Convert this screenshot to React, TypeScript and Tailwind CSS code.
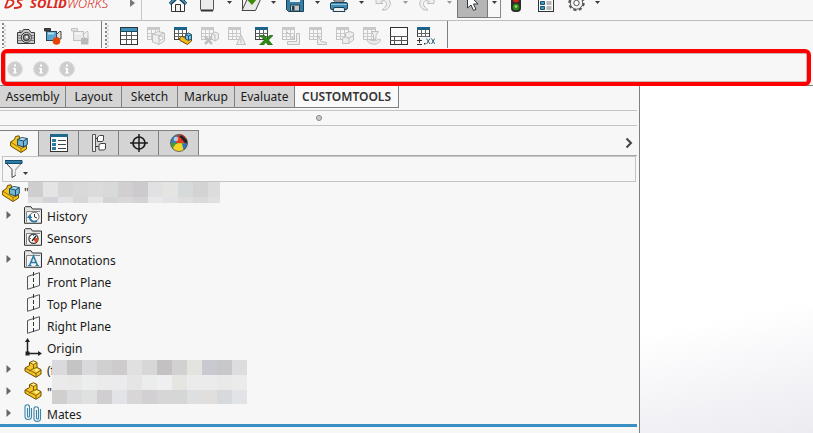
import React from 'react';
import clsx from 'clsx';

interface IconProps {
  children: React.ReactNode;
  width?: number;
  height?: number;
  className?: string;
}

function Icon({ children, width = 18, height = 18, className }: IconProps) {
  return (
    <svg
      width={width}
      height={height}
      viewBox={`0 0 ${width} ${height}`}
      fill="none"
      aria-hidden="true"
      className={clsx('block shrink-0', className)}
    >
      {children}
    </svg>
  );
}

/* ---------- quick access bar icons (20px tall, upper part runs off the window) ---------- */

const HomeIcon = () => (
  <Icon height={20}>
    <path d="M2.500 8V19.500H15.500V8" fill="#fff" stroke="#333" />
    <path d="M6.500 19V12.500H11.500V19" fill="#eee" stroke="#333" />
    <path d="M1 12L9 4.500L17 12" stroke="#173f56" strokeWidth="3.500" />
    <path d="M1 11.500L9 4L17 11.500" stroke="#4f9bc4" strokeWidth="1.500" />
  </Icon>
);

const NewIcon = () => (
  <Icon width={14} height={20}>
    <rect x="0.500" y="2.500" width="13" height="16" rx="1" fill="#ececec" stroke="#555" />
    <path d="M1 18.500H13" stroke="#333" strokeWidth="2" />
  </Icon>
);

const OpenIcon = () => (
  <Icon width={20} height={20}>
    <path d="M1.500 18V3.500H7" stroke="#444" />
    <path d="M1 18.500L6 7.500H19.500L14.500 18.500Z" fill="#e9e9e9" stroke="#444" />
    <path d="M5.500 7H16L11 13Z" fill="#3b8a06" />
  </Icon>
);

const SaveIcon = () => (
  <Icon height={20}>
    <path d="M0.500 3H17.500V19.500H2.500L0.500 17.500Z" fill="#347da3" stroke="#17405a" />
    <path d="M4 3H14V10H4Z" fill="#e4eef3" />
    <path d="M4.500 13H13.500V19H4.500Z" fill="#c8c8c8" stroke="#24424f" />
    <path d="M6 14H8.500V18.500H6Z" fill="#173f56" />
  </Icon>
);

const PrintIcon = () => (
  <Icon height={20}>
    <path d="M4 3H14V9H4Z" fill="#fff" stroke="#333" />
    <rect x="0.500" y="10.500" width="17" height="7" rx="1.500" fill="#3f8db5" stroke="#173f56" />
    <path d="M1 12.500H17" stroke="#8dc5e0" />
    <path d="M4 15.500H14L15 19.500H3Z" fill="#eee" stroke="#173f56" />
  </Icon>
);

const UndoIcon = ({ flipped = false }: { flipped?: boolean }) => (
  <Icon width={16} height={20} className={flipped ? '-scale-x-100' : undefined}>
    <path d="M1 4V11.500H8L5.500 9.500C9 7.500 12 9.500 11.500 12.500C11 14.500 9.500 16 7 18H11C14 16 15.500 13.500 15.300 11C15 6.500 9 4 4 7.500Z" fill="#efefef" stroke="#bdbdbd" />
  </Icon>
);

const CursorIcon = () => (
  <Icon width={13} height={20}>
    <path d="M1.500 1V16L5 13L7.500 18.500L10 17.300L7.500 12H12Z" fill="#fff" stroke="#2e3640" />
  </Icon>
);

const TrafficLightIcon = () => (
  <Icon width={10} height={20}>
    <rect x="0" y="-4" width="10" height="24" rx="4" fill="#2c2c2c" />
    <circle cx="5" cy="7.500" r="3" fill="#d42414" />
    <circle cx="5" cy="15" r="3.300" fill="#2f8b14" />
    <circle cx="5" cy="14.500" r="1.200" fill="#a5e28b" />
  </Icon>
);

const OptionsIcon = () => (
  <Icon width={16} height={20}>
    <rect x="0.500" y="2.500" width="15" height="17" fill="#fafafa" stroke="#333" />
    <path d="M2.500 9.500H6.500V12.500H2.500ZM2.500 14.500H6.500V17.500H2.500Z" fill="#4698c2" stroke="#17516f" />
    <path d="M8.500 10H13.500M8.500 12H13.500M8.500 15H13.500M8.500 17H13.500" stroke="#777" />
  </Icon>
);

const GearIcon = () => (
  <Icon width={17} height={20}>
    <circle cx="8.500" cy="11" r="7.200" stroke="#555" strokeWidth="2" strokeDasharray="3.200 2.455" />
    <circle cx="8.500" cy="11" r="6.200" fill="#f3f3f3" stroke="#555" />
    <circle cx="8.500" cy="11" r="2.700" fill="#fff" stroke="#555" />
  </Icon>
);

const CaretDown = ({ muted = false }: { muted?: boolean }) => (
  <Icon width={5} height={3}>
    <path d="M0 0H5L2.500 3Z" fill={muted ? '#9a9a9a' : '#3c3c3c'} />
  </Icon>
);

/* ---------- toolbar icons ---------- */

const CameraIcon = () => (
  <Icon>
    <path d="M0.500 5.500H4.500L6.500 2.500H12L14 5.500H17.500V16.500H0.500Z" fill="#c9c9c9" stroke="#3a3a3a" />
    <path d="M2 4H4.500" stroke="#3a3a3a" />
    <path d="M1 8.500H17M1 11H17M1 13.500H17" stroke="#6b6b6b" strokeWidth="0.800" />
    <circle cx="9.300" cy="10.500" r="5" fill="#e9e9e9" stroke="#333" />
    <circle cx="9.300" cy="10.500" r="3" fill="#999" stroke="#444" strokeWidth="1.300" />
    <circle cx="9.800" cy="10" r="1.200" fill="#eee" />
  </Icon>
);

const RecordIcon = ({ muted = false }: { muted?: boolean }) => {
  const line = muted ? '#c2c2c2' : '#20485e';
  const body = muted ? '#e9e9e9' : '#5aa7cf';
  return (
    <Icon>
      <path d="M0.500 1.500H6.500V4H0.500Z" fill={muted ? body : '#444'} stroke={muted ? line : '#333'} />
      <rect x="2.500" y="4.500" width="10" height="9" fill={body} stroke={line} />
      <path d="M4 6.500H10" stroke={muted ? '#f7f7f7' : '#b7dcee'} strokeWidth="2" />
      <path d="M12.500 7.500L15.500 4.500H17V12H15.500L12.500 10Z" fill={muted ? '#eee' : '#dedede'} stroke={muted ? line : '#444'} />
      {muted ? <path d="M10 11H17.500V17.500H10Z" fill="#bababa" /> : <circle cx="12.500" cy="14" r="3.800" fill="#e54304" />}
    </Icon>
  );
};

const TableIcon = () => (
  <Icon>
    <rect x="0.500" y="0.500" width="17" height="17" fill="#fff" stroke="#333" />
    <rect x="1" y="1" width="16" height="3" fill="#3f91bb" />
    <path d="M0 4.500H18" stroke="#1b4a64" />
    <path d="M6.500 5V17M11.500 5V17M1 8.500H17M1 12.500H17" stroke="#5a5a5a" />
  </Icon>
);

const SmallTable = ({ muted = false }: { muted?: boolean }) => (
  <>
    <rect x="0.500" y="0.500" width="12" height="12" fill={muted ? '#f7f7f7' : '#fff'} stroke={muted ? '#c4c4c4' : '#444'} />
    <rect x="0" y="0" width="13" height="3" fill={muted ? '#c9c9c9' : '#1d6288'} />
    <path d="M4.500 3V12M8.500 3V12M1 6.500H12M1 9.500H12" stroke={muted ? '#cbcbcb' : '#666'} />
  </>
);

const MutedTable = ({ children }: { children: React.ReactNode }) => (
  <Icon>
    <SmallTable muted />
    <g fill="#ededed" stroke="#bfbfbf">{children}</g>
  </Icon>
);

const TablePartIcon = () => (
  <Icon>
    <SmallTable />
    <path d="M5.500 11L8 9L11.500 11.500V8L14.500 6.500L17.500 8V14L13.500 17.500L6 13.500Z" fill="#f2b91a" stroke="#6d4c00" />
    <path d="M11.500 7.500L14.500 6L17.500 7.500V12L14.500 13.500L11.500 12Z" fill="#7cc0e0" stroke="#1e5673" />
    <path d="M14.500 9V13M12 8L14.500 9L17 8" stroke="#1e5673" />
  </Icon>
);

const ExcelTableIcon = () => (
  <Icon>
    <SmallTable />
    <path d="M5 8.500H9.500L12 11.500L14.500 8.500H18L13.500 13L17.500 18H13L11 15L8.500 18H4.500L9.500 13Z" fill="#2d8b12" stroke="#1b5d09" strokeWidth="0.700" />
  </Icon>
);

const TitleBlockIcon = () => (
  <Icon>
    <rect x="0.500" y="0.500" width="17" height="17" fill="#fcfcfc" stroke="#333" />
    <path d="M0 9.500H18M0 13.500H18M4.500 10V17M11.500 10V17" stroke="#555" />
  </Icon>
);

const ToleranceIcon = () => (
  <Icon>
    <SmallTable />
    <rect x="0" y="10" width="18" height="8" fill="#f7f7f7" />
    <path d="M0 13.500H5M2.500 11V16M0 17.500H5" stroke="#333" />
    <path d="M7 16H8.500V17.500H7Z" fill="#333" />
    <path d="M9.500 11.500L13 17M13 11.500L9.500 17M14.500 11.500L17.700 17M17.700 11.500L14.500 17" stroke="#30617d" />
  </Icon>
);

/* ---------- feature tree icons ---------- */

const AssemblyIcon = () => (
  <Icon>
    <path d="M0.600 7L4.500 4.500L5.500 1.500L9 0.800L10.500 6L16.500 10.500V14L11 17.500L0.600 11Z" fill="#f5c51c" stroke="#6d4c00" />
    <path d="M0.600 7L11 13.500V17.500M11 13.500L16.500 11" stroke="#9b7108" />
    <path d="M7.500 4.500L11.500 2.500L17.300 3.500V9.500L13.500 12L7.500 10Z" fill="#73b6d8" stroke="#1e4c65" />
    <path d="M7.500 4.500L13.500 6V12M13.500 6L17.300 3.500" stroke="#1e4c65" />
    <path d="M9.300 4.300L11.700 3L15.700 3.700L13.300 5.200Z" fill="#b7dff1" />
  </Icon>
);

const PartIcon = () => (
  <Icon>
    <path d="M1 8L5.500 5.500V2.500L9.500 0.800L13 2.500V7.500L17 9.500V14L12 17.300L1 11Z" fill="#f6c726" stroke="#6d4c00" />
    <path d="M5.500 2.500L9.500 4.500V8.500L5 11M9.500 4.500L13 2.500M9.500 8.500L13 7.500M1 8L12 13.500V17M12 13.500L17 10" stroke="#82600b" />
    <path d="M6.800 2.500L9.500 1.500L12 2.600L9.500 3.800Z" fill="#fff09c" />
    <path d="M10.500 9.300L13 8.500L15.500 9.700L12 12Z" fill="#fff09c" />
  </Icon>
);

const Folder = ({ children }: { children: React.ReactNode }) => (
  <Icon>
    <path d="M0.500 17V1.500L1.500 0.700H7L8.500 3H17.500V17.300H0.500Z" fill="#e3e3e3" stroke="#333" />
    <path d="M2.500 16V5.500H16" stroke="#888" />
    <rect x="3" y="6" width="13.500" height="10" fill="#f3f3f3" />
    {children}
  </Icon>
);

const HistoryIcon = () => (
  <Folder>
    <circle cx="10.500" cy="10.700" r="4.500" fill="#fff" stroke="#6a6a6a" />
    <path d="M10.500 8V11L13 12" stroke="#333" />
    <path d="M13 15C9 17 5.500 14.500 5.500 11" stroke="#1e77a5" strokeWidth="1.500" />
    <path d="M3 12L5.500 8.500L8.500 12Z" fill="#1e77a5" />
  </Folder>
);

const SensorsIcon = () => (
  <Folder>
    <circle cx="9.500" cy="10.700" r="4.600" fill="#fff" stroke="#333" strokeWidth="1.200" />
    <path d="M9.500 11L14 9.500V12.500L11.500 15Z" fill="#e04618" />
    <path d="M8 13L12 8" stroke="#222" strokeWidth="1.300" />
    <path d="M6 10.500H7M9.500 7V8" stroke="#1e77a5" />
  </Folder>
);

const AnnotationsIcon = () => (
  <Folder>
    <path d="M5.500 15.500L9.500 6L13.500 15.500M7 12.500H12" stroke="#2b7da6" strokeWidth="1.600" />
    <path d="M4 15.500H7.500M11.500 15.500H15" stroke="#2b7da6" />
  </Folder>
);

const PlaneIcon = () => (
  <Icon>
    <path d="M3.500 4.500L15.500 0.700V13.500L3.500 17.300Z" stroke="#555" />
    <path d="M9.500 0V18" stroke="#333" strokeDasharray="4 2" />
  </Icon>
);

const OriginIcon = () => (
  <Icon>
    <path d="M3.500 2V15.500H16" stroke="#222" strokeWidth="1.500" />
    <path d="M3.500 0L6 4H1Z" fill="#222" />
    <path d="M18 15.500L14 13V18Z" fill="#222" />
    <path d="M1.500 13.500H5.500V17.500H1.500Z" fill="#222" />
  </Icon>
);

const MatesIcon = () => (
  <Icon>
    <g stroke="#3786aa" strokeWidth="1.100">
      <path d="M3.500 4V12C3.500 13.500 5.500 13.500 5.500 12V3C5.500 0 1 0 1 3V12.500C1 16.500 7.500 16.500 7.500 12.500V4" />
      <path d="M12.500 6V14C12.500 15.500 14.500 15.500 14.500 14V5C14.500 2 10 2 10 5V14.500C10 18.300 16.500 18.300 16.500 14.500V5" />
    </g>
  </Icon>
);

const PropertyIcon = () => (
  <Icon>
    <rect x="0.500" y="0.500" width="17" height="17" fill="#fff" stroke="#333" />
    <rect x="0" y="0" width="18" height="3" fill="#1f698f" />
    <path d="M2 5H6V8H2ZM2 9H6V12H2ZM2 13H6V16H2Z" fill="#277ca8" />
    <path d="M8 6.500H16M8 10.500H16M8 14.500H16" stroke="#444" />
  </Icon>
);

const ConfigurationIcon = () => (
  <Icon>
    <path d="M2.500 0.500V17.500H5.500V0.500Z" fill="#eee" stroke="#555" />
    <path d="M5.500 4.500H8.500M5.500 12.500H8.500" stroke="#333" />
    <path d="M7.500 3L9.500 1.500H13.500V6.500L12 7.500H7.500ZM9 10.500L11 9.500H15.500V15L14 16H9Z" fill="#fff" stroke="#444" />
  </Icon>
);

const DimXpertIcon = () => (
  <Icon>
    <circle cx="9" cy="9" r="6" stroke="#1d1d1d" strokeWidth="1.700" />
    <path d="M9 0V18M0 9H18" stroke="#1d1d1d" strokeWidth="1.500" />
  </Icon>
);

const DisplayIcon = () => (
  <Icon>
    <circle cx="9" cy="9" r="8.500" fill="#4c9b31" />
    <path d="M9 9V0.500A8.500 8.500 0 0 0 0.600 9Z" fill="#387dba" />
    <path d="M6 9L8 0.500H12C15.500 2 17.500 5 17.500 9H9Z" fill="#e63b24" />
    <path d="M3 14.500C4 11.500 6 9.500 9 9L14 10L14 15.500C10.500 18.500 6 18 3 14.500Z" fill="#f3d52a" />
    <path d="M12 10L17.500 8.500C17.500 12 16 14.500 13.500 16Z" fill="#2d76b7" />
    <path d="M9 2L12 1.500L17 6V9.500L14.500 8.500Z" fill="#26201f" />
    <circle cx="6" cy="5" r="2.300" fill="#fff" opacity="0.600" />
    <circle cx="9" cy="9" r="8.500" stroke="#4a4a4a" strokeWidth="0.700" />
  </Icon>
);

const FilterIcon = () => (
  <Icon>
    <path d="M0.700 2.500L7 9.500V17.500L10.500 15.500V9.500L17 2.500Z" fill="#f5f5f5" stroke="#444" />
    <path d="M10 9.500L15 4V6L11 10.500V15H9.500Z" fill="#bbb" />
    <path d="M0 0.500H17V3.500H0Z" fill="#2c7ea8" stroke="#184b66" />
  </Icon>
);

const InfoIcon = () => (
  <Icon width={16} height={16}>
    <circle cx="8" cy="8" r="7.500" fill="#cdcdcd" stroke="#e0e0e0" />
    <path d="M7 3.500H9V5.500H7ZM6 7H9V11.500H10V12.500H6V11.500H7V8H6Z" fill="#fff" />
  </Icon>
);

const DassaultLogo = () => (
  <Icon width={20} height={10}>
    <g stroke="#da291c" strokeWidth="1.800">
      <path d="M1 7.500C4 8.500 10 5 9.500 2C9.200 0.500 7 -1 4 0L1 8" />
      <path d="M19 -0.500C15.500 -0.500 13 0 14 2L17 4.500C18 7 15 8 10 8" />
    </g>
  </Icon>
);

const quickActions = [
  { name: 'New', icon: <NewIcon />, muted: false },
  { name: 'Open', icon: <OpenIcon />, muted: false },
  { name: 'Save', icon: <SaveIcon />, muted: false },
  { name: 'Print', icon: <PrintIcon />, muted: false },
  { name: 'Undo', icon: <UndoIcon />, muted: true },
  { name: 'Redo', icon: <UndoIcon flipped />, muted: true },
];

const captureTools = [
  { name: 'Image capture', icon: <CameraIcon /> },
  { name: 'Record video', icon: <RecordIcon /> },
  { name: 'Stop recording', icon: <RecordIcon muted /> },
];

const tableTools = [
  { name: 'General table', icon: <TableIcon /> },
  { name: 'Hole table', icon: <MutedTable><path d="M5.500 7L11 4.500L17.500 6V14L12 17.500L5.500 15Z" /><path d="M5.500 7L12 8.500V17M12 8.500L17 6" /><circle cx="14" cy="11" r="2" fill="#fff" /></MutedTable> },
  { name: 'Bill of materials', icon: <TablePartIcon /> },
  { name: 'Revision table', icon: <MutedTable><path d="M4 10L11 17M11 10L4 17" strokeWidth="2.500" /><path d="M10.500 6.500L14 5L17.500 6.500V12L14 14L10.500 12Z" /><path d="M10.500 6.500L14 8V14" /></MutedTable> },
  { name: 'Revision symbol', icon: <MutedTable><path d="M13 8L17.500 17.500H8.500Z" /><path d="M12 12.500L13 11.500V16" /></MutedTable> },
  { name: 'Design table', icon: <ExcelTableIcon /> },
  { name: 'Weldment cut list', icon: <MutedTable><path d="M14.500 6.500H17.500V17.500H5.500V14.500H14.500Z" /><path d="M5 5L12 12M12 8V12H8" /></MutedTable> },
  { name: 'Bend table', icon: <MutedTable><path d="M8.500 7.500V17.500H17.500V15.500L12 14.500Z" /></MutedTable> },
  { name: 'Punch table', icon: <MutedTable><path d="M9.500 6L14 4.500L17.500 6V13L13 16.500H6.500V11L9.500 10Z" /><path d="M9.500 10L13 11V16M13 11L17 9" /></MutedTable> },
  { name: 'Weld table', icon: <MutedTable><path d="M8.500 4.500H15.500L13 8.500V12H10.500V8.500Z" /><path d="M3.500 12.500C6 11 8 15 11 13.500C13 14.500 15 11.500 17.500 12.500C17 18.500 6 19 3.500 12.500Z" /></MutedTable> },
  { name: 'Title block table', icon: <TitleBlockIcon /> },
  { name: 'General tolerance table', icon: <ToleranceIcon /> },
];

const commandTabs = [
  { label: 'Assembly', width: 'w-[66px]' },
  { label: 'Layout', width: 'w-14' },
  { label: 'Sketch', width: 'w-14' },
  { label: 'Markup', width: 'w-[57px]' },
  { label: 'Evaluate', width: 'w-[60px]' },
  { label: 'CUSTOMTOOLS', width: 'w-[104px]', active: true },
];

const managerTabs = [
  { name: 'FeatureManager', icon: <AssemblyIcon />, active: true },
  { name: 'PropertyManager', icon: <PropertyIcon /> },
  { name: 'ConfigurationManager', icon: <ConfigurationIcon /> },
  { name: 'DimXpertManager', icon: <DimXpertIcon /> },
  { name: 'DisplayManager', icon: <DisplayIcon /> },
];

const treeItems = [
  { label: 'History', icon: <HistoryIcon />, expandable: true },
  { label: 'Sensors', icon: <SensorsIcon /> },
  { label: 'Annotations', icon: <AnnotationsIcon />, expandable: true },
  { label: 'Front Plane', icon: <PlaneIcon /> },
  { label: 'Top Plane', icon: <PlaneIcon /> },
  { label: 'Right Plane', icon: <PlaneIcon /> },
  { label: 'Origin', icon: <OriginIcon /> },
];

const rootMask = [
  ['#cfcece', '#e4e4e4', '#d6d6d6', '#d8d9d9', '#dadbda', '#d8dada', '#d1cfd0', '#cccacd', '#e1e1e3', '#e4e4e2', '#d6dadb', '#d4d3d4', '#dcdcdd'],
  ['#dededf', '#d2d4d9', '#e3e3e3', '#d8d7d8', '#e5e5e2', '#d2d4d6', '#d8d7d9', '#d4d2d4', '#e8e8eb', '#e2e3e5', '#dfdfdf', '#dad9dc', '#e0e0e2'],
];

const componentMask = [
  ['#dad9de', '#c4c4c4', '#d9d9db', '#d0d0d0', '#cdcbcc', '#e0e0e0', '#d6d7d6', '#c3c1c2', '#d1d1d2', '#e3e3df', '#c8cacf', '#c8c7ca', '#dddde0'],
  ['#eaeaea', '#e9e9e7', '#eceeed', '#ebebeb', '#ebebed', '#e5e5e6', '#ebecec', '#efefef', '#e5e5e2', '#ebebeb', '#ebebeb', '#e9e9e9', '#ebebec'],
  ['#d0cfce', '#dbdadd', '#dfe0e0', '#d0ced0', '#e2e3e6', '#d9d6d8', '#d2d0d2', '#d6d6d6', '#d5d6d6', '#dedfe0', '#e0dfde', '#d7dadc', '#e2e3e6'],
];

function Mosaic({ rows, className }: { rows: string[][]; className?: string }) {
  return (
    <div aria-hidden="true" className={clsx('grid overflow-hidden', className)}>
      {rows.map((row, i) => (
        <div key={i} className="flex">
          {row.map((color, j) => (
            <span key={j} className="w-[15px] shrink-0" style={{ backgroundColor: color }} />
          ))}
        </div>
      ))}
    </div>
  );
}

function Grip() {
  return (
    <Icon width={4} height={26}>
      <path d="M1 0V26" stroke="#858585" strokeWidth="2" strokeDasharray="2 2" />
      <path d="M3 2V26" stroke="#b0b0b0" strokeWidth="1" strokeDasharray="2 2" />
    </Icon>
  );
}

function QuickAccessBar() {
  return (
    <header className="flex h-[21px] items-start overflow-hidden border-b border-[#bdbdbd]">
      <div className="flex h-5 w-[142px] shrink-0 items-start border-r border-[#c6c6c6] pl-1">
        <DassaultLogo />
        <span className="ml-1.5 text-[13px] leading-[7px] font-bold text-[#da291c] italic">
          SOLID<span className="font-light">WORKS</span>
        </span>
        <button type="button" aria-label="Show menu" className="ml-auto pr-1.5">
          <Icon width={5} height={7}><path d="M0 -1L5 3L0 7Z" fill="#777" /></Icon>
        </button>
      </div>
      <div className="flex h-3 shrink-0 items-end pl-[27px]">
        <button type="button" aria-label="Home" className="mr-1.5"><HomeIcon /></button>
        {quickActions.map((action) => (
          <div key={action.name} className="flex items-end">
            <button type="button" aria-label={action.name} className="flex w-7 justify-center">{action.icon}</button>
            <button type="button" aria-label={`${action.name} options`} className="flex w-4 justify-center pb-2">
              <CaretDown muted={action.muted} />
            </button>
          </div>
        ))}
      </div>
      <button type="button" aria-label="Select" className="flex h-[18px] w-[31px] shrink-0 items-start justify-center border border-t-0 border-[#777] bg-[#b5b5b5]">
        <span className="-mt-2"><CursorIcon /></span>
      </button>
      <button type="button" aria-label="Select options" className="flex h-[18px] w-[13px] shrink-0 items-start justify-center border-r border-b border-[#888] pt-px">
        <CaretDown />
      </button>
      <div className="flex h-3 shrink-0 items-end">
        <button type="button" aria-label="Rebuild" className="flex w-[30px] justify-center"><TrafficLightIcon /></button>
        <button type="button" aria-label="File properties" className="flex w-[30px] justify-center"><OptionsIcon /></button>
        <button type="button" aria-label="Options" className="flex w-[30px] justify-center"><GearIcon /></button>
        <button type="button" aria-label="More options" className="flex w-3 justify-center pb-2"><CaretDown /></button>
      </div>
    </header>
  );
}

function ToolGroup({ tools }: { tools: { name: string; icon: React.ReactNode }[] }) {
  return (
    <div className="flex items-end pb-[3px] pl-1.5">
      {tools.map((tool) => (
        <button key={tool.name} type="button" aria-label={tool.name} className="flex w-[27px] shrink-0 justify-center">
          {tool.icon}
        </button>
      ))}
    </div>
  );
}

function CommandToolbar() {
  return (
    <div className="flex h-[27px] overflow-hidden">
      <div className="flex w-[102px] shrink-0 border-r border-[#808080] pt-0.5 pl-0.5">
        <Grip />
        <ToolGroup tools={captureTools} />
      </div>
      <div className="flex w-[346px] shrink-0 border-r border-[#808080] pt-0.5 pl-[3px]">
        <Grip />
        <ToolGroup tools={tableTools} />
      </div>
    </div>
  );
}

function TreeRow({ icon, label, expandable }: { icon: React.ReactNode; label: string; expandable?: boolean }) {
  return (
    <li className="flex h-[22px] items-center pl-1.5">
      <span className="flex w-[18px] shrink-0">
        {expandable && (
          <button type="button" aria-label={`Expand ${label}`} className="pb-px">
            <Icon width={5} height={8}><path d="M0.500 0L5 4L0.500 8Z" fill="#666" /></Icon>
          </button>
        )}
      </span>
      {icon}
      <span className="pt-1 pl-[5px]">{label}</span>
    </li>
  );
}

function FeatureTree() {
  return (
    <div className="mr-0.5 border-b-[3px] border-[#3a8fc5]">
      <div className="flex h-[22px] items-start pl-0.5">
        <span className="pt-0.5"><AssemblyIcon /></span>
        <span className="w-2 pt-[3px] pl-1">"</span>
        <Mosaic rows={rootMask} className="h-[21px] w-48 grid-rows-[15px_6px]" />
      </div>
      <ul>
        {treeItems.map((item) => (
          <TreeRow key={item.label} {...item} />
        ))}
      </ul>
      <div className="relative">
        <ul>
          <TreeRow icon={<PartIcon />} label="(f" expandable />
          <TreeRow icon={<PartIcon />} label={'"'} expandable />
        </ul>
        <Mosaic rows={componentMask} className="absolute top-0.5 left-[52px] h-11 w-[195px] grid-rows-[15px_15px_14px]" />
      </div>
      <ul>
        <TreeRow icon={<MatesIcon />} label="Mates" expandable />
      </ul>
    </div>
  );
}

export default function App() {
  return (
    <div className="flex min-h-screen flex-col overflow-hidden bg-[#f7f7f7] font-['Noto_Sans','Open_Sans',sans-serif] text-xs text-[#1a1a1a]">
      <QuickAccessBar />
      <CommandToolbar />

      <div className="h-[38px] border-b border-[#808080] pt-px">
        <div className="mr-0.5 ml-px flex h-[37px] items-center gap-2.5 rounded-md border-4 border-[#fe0000] pt-0.5 pl-0.5 shadow-[inset_0_0_0_1px_#d0b5b5]">
          <button type="button" aria-label="Document information"><InfoIcon /></button>
          <button type="button" aria-label="Property information"><InfoIcon /></button>
          <button type="button" aria-label="File information"><InfoIcon /></button>
        </div>
      </div>

      <div className="flex flex-1">
        <aside className="flex w-[640px] shrink-0 flex-col border-r border-[#808080]">
          <nav className="flex h-[22px]">
            {commandTabs.map((tab) => (
              <button
                key={tab.label}
                type="button"
                className={clsx(
                  'flex shrink-0 items-center justify-center border-r border-b border-[#808080]',
                  tab.width,
                  tab.active ? 'bg-[#f9f9f9] font-semibold text-[#333]' : 'bg-[#d4d4d4]'
                )}
              >
                {tab.label}
              </button>
            ))}
          </nav>

          <div className="mt-0.5 mr-0.5 flex h-4 items-center justify-center border-y border-[#c4c4c4]">
            <span className="size-1.5 rounded-full border border-[#888] bg-[#ccc]" />
          </div>

          <div className="mt-1 mr-0.5 flex h-[26px] border-b border-[#a9a9a9]">
            {managerTabs.map((tab) => (
              <button
                key={tab.name}
                type="button"
                aria-label={tab.name}
                className={clsx(
                  'flex shrink-0 items-center justify-center border-t border-r border-[#808080]',
                  tab.active ? '-mb-px w-[39px] bg-[#f7f7f7]' : 'w-10 bg-[#d4d4d4]'
                )}
              >
                {tab.icon}
              </button>
            ))}
            <button type="button" aria-label="Expand panel" className="mr-1 ml-auto">
              <Icon width={8} height={12}><path d="M1.500 1.500L6 6L1.500 10.500" stroke="#444" strokeWidth="2" /></Icon>
            </button>
          </div>

          <div className="mr-[3px] ml-0.5 flex h-[26px] items-center border border-[#c4c4c4] pl-0.5">
            <button type="button" aria-label="Filter options" className="flex items-center">
              <FilterIcon />
              <span className="pt-2"><CaretDown /></span>
            </button>
            <input type="text" aria-label="Filter tree" className="min-w-0 flex-1 bg-transparent px-1 outline-none" />
          </div>

          <FeatureTree />
        </aside>

        <main aria-label="Graphics area" className="flex-1 bg-linear-168 from-white from-65% to-[#ebebf1]" />
      </div>
    </div>
  );
}
